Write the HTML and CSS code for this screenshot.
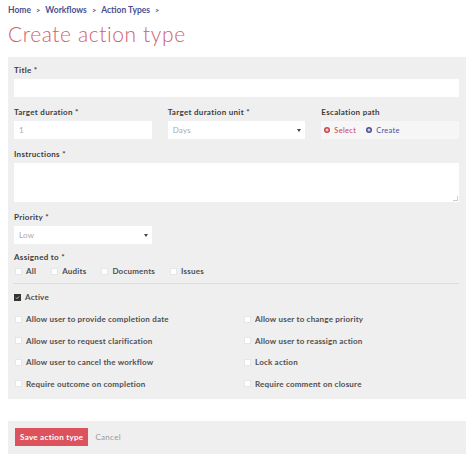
FILE: index.html
```html
<!DOCTYPE html>
<html>
<head>
<meta charset="utf-8">
<link rel="stylesheet" href="styles.css">
</head>
<body>
<nav class="breadcrumb">
  <a>Home</a><span class="sep">&gt;</span><a>Workflows</a><span class="sep">&gt;</span><a>Action Types</a><span class="sep">&gt;</span>
</nav>
<h1 class="page-title">Create action type</h1>

<form class="panel">
  <div class="group">
    <label class="label">Title *</label>
    <div class="input"></div>
  </div>

  <div class="grid3">
    <div class="group">
      <label class="label">Target duration *</label>
      <div class="input"><span class="ph">1</span></div>
    </div>
    <div class="group">
      <label class="label">Target duration unit *</label>
      <div class="input select"><span class="ph">Days</span><span class="caret"></span></div>
    </div>
    <div class="group">
      <label class="label">Escalation path</label>
      <div class="esc">
        <span class="esc-item red"><svg viewBox="0 0 10 10" class="ico"><circle cx="5" cy="5" r="5"/><path d="M5 2.4v5.2M2.4 5h5.2" stroke="#fff" stroke-width="1.6"/></svg>Select</span>
        <span class="esc-item blue"><svg viewBox="0 0 10 10" class="ico"><circle cx="5" cy="5" r="5"/><path d="M5 2.4v5.2M2.4 5h5.2" stroke="#fff" stroke-width="1.6"/></svg>Create</span>
      </div>
    </div>
  </div>

  <div class="group">
    <label class="label">Instructions *</label>
    <div class="input textarea"><span class="grip"></span></div>
  </div>

  <div class="grid3">
    <div class="group group-priority">
      <label class="label">Priority *</label>
      <div class="input select"><span class="ph">Low</span><span class="caret"></span></div>
    </div>
  </div>

  <div class="group-assigned">
    <label class="label">Assigned to *</label>
    <div class="check-inline">
      <span class="check"><span class="box"></span>All</span>
      <span class="check"><span class="box"></span>Audits</span>
      <span class="check"><span class="box"></span>Documents</span>
      <span class="check"><span class="box"></span>Issues</span>
    </div>
  </div>

  <hr class="divider">

  <div class="check active"><span class="box checked"><svg viewBox="0 0 8 8"><path d="M1.6 4.2l1.6 1.6 3.2-3.4" fill="none" stroke="#fff" stroke-width="1.2"/></svg></span>Active</div>

  <div class="options">
    <span class="check"><span class="box"></span>Allow user to provide completion date</span>
    <span class="check"><span class="box"></span>Allow user to change priority</span>
    <span class="check"><span class="box"></span>Allow user to request clarification</span>
    <span class="check"><span class="box"></span>Allow user to reassign action</span>
    <span class="check"><span class="box"></span>Allow user to cancel the workflow</span>
    <span class="check"><span class="box"></span>Lock action</span>
    <span class="check"><span class="box"></span>Require outcome on completion</span>
    <span class="check"><span class="box"></span>Require comment on closure</span>
  </div>
</form>

<div class="actions">
  <button class="btn-save" type="button">Save action type</button>
  <span class="cancel">Cancel</span>
</div>
</body>
</html>
```

FILE: styles.css
```css
* { box-sizing: border-box; }

body {
  margin: 0;
  padding: 0 8px;
  font-family: Lato, "Open Sans", Arial, sans-serif;
  background: #fff;
  color: #444;
}

.breadcrumb {
  display: flex;
  align-items: center;
  height: 12px;
  margin-top: 4px;
  font-size: 8.5px;
  font-weight: 700;
  color: #4b4f8f;
}
.breadcrumb .sep {
  margin: 0 5px;
  font-size: 7.5px;
}

.page-title {
  margin: 3px 0 0 0;
  height: 38px;
  font-size: 21px;
  font-weight: 300;
  letter-spacing: 0.6px;
  line-height: 30px;
  color: #d0606e;
}

.panel {
  display: block;
  background: #efefef;
  padding: 8px 7px 9px 6px;
}

.group { margin-bottom: 10px; }
.group-priority { margin-bottom: 8px; }

.label {
  display: block;
  height: 10px;
  line-height: 10px;
  margin-bottom: 4px;
  font-size: 8px;
  font-weight: 700;
  letter-spacing: 0.3px;
  color: #3d3d3d;
}

.input {
  position: relative;
  display: flex;
  align-items: center;
  height: 18px;
  background: #fff;
  padding: 0 5px;
  font-size: 8px;
}
.ph { color: #aaa; letter-spacing: 0.2px; }

.select .caret {
  position: absolute;
  right: 4px;
  top: 8px;
  border-left: 2px solid transparent;
  border-right: 2px solid transparent;
  border-top: 3px solid #444;
}

.textarea { height: 39px; }
.textarea .grip {
  position: absolute;
  right: 1px;
  bottom: 1px;
  width: 5px;
  height: 5px;
  border-right: 1px solid #ccc;
  border-bottom: 1px solid #ccc;
}

.grid3 {
  display: grid;
  grid-template-columns: 1fr 1fr 1fr;
  column-gap: 16px;
}

.esc {
  display: flex;
  align-items: center;
  gap: 10px;
  height: 18px;
  padding: 0 3px;
  background: #f6f6f6;
  font-size: 7.5px;
  letter-spacing: 0.3px;
}
.esc-item { display: flex; align-items: center; gap: 4px; }
.esc-item .ico { width: 6px; height: 6px; }
.red { color: #c9454f; }
.red .ico { fill: #c9454f; }
.blue { color: #4a4f9c; }
.blue .ico { fill: #4a4f9c; }

.group-assigned .label { margin-bottom: 3px; }

.check-inline {
  display: flex;
  gap: 15px;
  height: 12px;
  padding-left: 1px;
}

.check {
  display: flex;
  align-items: center;
  gap: 4px;
  height: 12px;
  font-size: 8px;
  font-weight: 700;
  letter-spacing: 0.2px;
  color: #505050;
  white-space: nowrap;
}

.box {
  display: inline-flex;
  width: 7px;
  height: 7px;
  background: #fff;
  border: 1px solid #e6e6e6;
  flex: none;
}
.box.checked {
  background: #333;
  border-color: #333;
  align-items: center;
  justify-content: center;
}
.box.checked svg { width: 7px; height: 7px; }

.divider {
  margin: 6px 0 7px 0;
  border: 0;
  border-top: 1px solid #dcdcdc;
  height: 0;
}

.active { margin-bottom: 10px; }

.options {
  display: grid;
  grid-template-columns: 229px 1fr;
  row-gap: 9.5px;
  padding-left: 1px;
}

.actions {
  display: flex;
  align-items: center;
  gap: 7px;
  margin-top: 22px;
  height: 33px;
  padding: 0 7px;
  background: #efefef;
}

.btn-save {
  height: 18px;
  padding: 0 5px;
  border: 0;
  background: #dc525d;
  color: #fff;
  font-family: inherit;
  font-size: 8px;
  font-weight: 700;
  letter-spacing: 0.3px;
}

.cancel {
  font-size: 8px;
  letter-spacing: 0.3px;
  color: #9a9a9a;
}
```
